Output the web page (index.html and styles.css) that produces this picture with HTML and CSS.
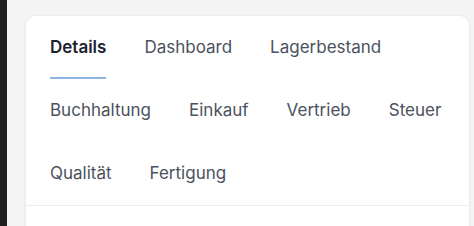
FILE: index.html
```html
<!DOCTYPE html>
<html lang="de">
<head>
    <meta charset="UTF-8">
    <title>Artikel</title>
    <link rel="stylesheet" href="styles.css">
</head>
<body>
    <div class="sidebar"></div>
    <div class="main">
        <div class="card">
            <div class="tabs">
                <a class="tab active" href="#">Details</a>
                <a class="tab" href="#">Dashboard</a>
                <a class="tab" href="#">Lagerbestand</a>
                <a class="tab" href="#">Buchhaltung</a>
                <a class="tab" href="#">Einkauf</a>
                <a class="tab" href="#">Vertrieb</a>
                <a class="tab" href="#">Steuer</a>
                <a class="tab" href="#">Qualität</a>
                <a class="tab" href="#">Fertigung</a>
            </div>
            <div class="card-body"></div>
        </div>
    </div>
</body>
</html>
```

FILE: styles.css
```css
body {
    margin: 0;
    font-family: Inter, "Noto Sans", sans-serif;
    background-color: #f4f4f5;
    display: flex;
    height: 100vh;
    overflow: hidden;
}

.sidebar {
    width: 7px;
    background-color: #1f1f23;
    flex-shrink: 0;
}

.main {
    flex: 1;
    display: flex;
    padding: 15px 4px 0 18px;
}

.card {
    flex: 1;
    background-color: #fff;
    border: 1px solid #ececee;
    border-bottom: none;
    border-radius: 10px 10px 0 0;
    box-shadow: 0 1px 3px rgba(0, 0, 0, 0.04);
}

.tabs {
    display: flex;
    flex-wrap: wrap;
    column-gap: 38px;
    padding: 0 24px;
    border-bottom: 1px solid #ededef;
}

.tab {
    display: block;
    height: 63px;
    line-height: 63px;
    font-size: 17px;
    color: #4b5260;
    text-decoration: none;
    box-sizing: border-box;
}

.tab.active {
    color: #1d2230;
    font-weight: 600;
    border-bottom: 2px solid #8fb3e2;
}
```
